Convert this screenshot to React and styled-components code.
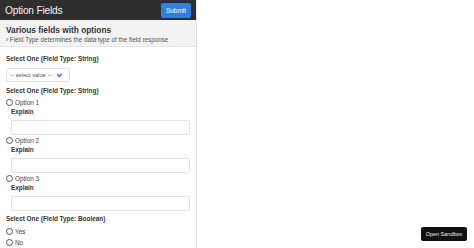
import React from "react"
import styled, { createGlobalStyle } from "styled-components"

const Global = createGlobalStyle`
  html, body {
    margin: 0;
    padding: 0;
    background: #fff;
    font-family: "Liberation Sans", Arial, sans-serif;
  }
`

const Page = styled.div`
  display: flex;
  align-items: flex-start;
  height: 248px;
  overflow: hidden;
  position: relative;
`

const Panel = styled.div`
  width: 196px;
  height: 248px;
  border-right: 1px solid #e0e0e0;
  flex-shrink: 0;
  overflow: hidden;
`

const TopBar = styled.div`
  height: 20px;
  background: #2e2e2e;
  display: flex;
  align-items: center;
  justify-content: space-between;
  padding: 0 5px 0 5px;
`

const Title = styled.div`
  color: #f2f2f2;
  font-size: 10.2px;
  letter-spacing: -0.2px;
`

const SubmitButton = styled.button`
  background: #2f7fe0;
  color: #fff;
  border: none;
  border-radius: 2px;
  font-family: inherit;
  font-size: 6.5px;
  height: 15px;
  width: 30px;
  padding: 0;
  margin-top: 1px;
`

const Intro = styled.div`
  background: #f3f3f3;
  height: 27px;
  box-sizing: border-box;
  padding: 5px 6px 0;
  border-bottom: 1px solid #e6e6e6;
`

const IntroTitle = styled.div`
  font-size: 8.3px;
  font-weight: bold;
  color: #333;
`

const IntroNote = styled.div`
  font-size: 6.3px;
  color: #555;
  margin-top: 1px;
`

const Form = styled.div`
  padding: 8px 6px 0;
`

const Label = styled.div`
  font-size: 6.4px;
  font-weight: bold;
  color: #333;
  line-height: 8px;
  margin-top: ${p => p.$top || 0}px;
  margin-bottom: ${p => p.$gap || 0}px;
`

const SelectBox = styled.div`
  width: 64px;
  height: 14px;
  box-sizing: border-box;
  border: 1px solid #e2e2e2;
  border-radius: 2px;
  display: flex;
  align-items: center;
  gap: 4px;
  padding-left: 3px;
  font-size: 5.8px;
  color: #555;
  margin-bottom: 5px;
`

const Option = styled.label`
  display: flex;
  align-items: center;
  gap: 2px;
  font-size: 6.4px;
  color: #444;
  height: 11px;
`

const Radio = styled.span`
  width: 5px;
  height: 5px;
  border: 1px solid #555;
  border-radius: 50%;
  display: inline-block;
`

const Explain = styled.div`
  padding-left: 5px;
`

const ExplainLabel = styled.div`
  font-size: 6.4px;
  font-weight: bold;
  color: #333;
  line-height: 8px;
  margin: 0 0 4px;
`

const TextInput = styled.div`
  height: 15px;
  box-sizing: border-box;
  border: 1px solid #e2e2e2;
  border-radius: 2px;
`

const SandboxButton = styled.button`
  position: absolute;
  right: 7px;
  bottom: 7px;
  background: #111;
  color: #f0f0f0;
  border: none;
  border-radius: 2px;
  font-family: inherit;
  font-size: 5.5px;
  height: 14px;
  width: 46px;
  padding: 0;
`

const options = ["Option 1", "Option 2", "Option 3"]

export default function App() {
  return (
    <Page>
      <Global />
      <Panel>
        <TopBar>
          <Title>Option Fields</Title>
          <SubmitButton>Submit</SubmitButton>
        </TopBar>
        <Intro>
          <IntroTitle>Various fields with options</IntroTitle>
          <IntroNote>› Field Type determines the data type of the field response</IntroNote>
        </Intro>
        <Form>
          <Label $gap={5}>Select One (Field Type: String)</Label>
          <SelectBox>
            -- select value --
            <svg width="7" height="5" viewBox="0 0 7 5">
              <path d="M1 1l2.5 2.5L6 1" stroke="#2f6fd6" strokeWidth="1.3" fill="none" />
            </svg>
          </SelectBox>
          <Label $gap={2}>Select One (Field Type: String)</Label>
          {options.map(o => (
            <React.Fragment key={o}>
              <Option>
                <Radio />
                {o}
              </Option>
              <Explain>
                <ExplainLabel>Explain</ExplainLabel>
                <TextInput />
              </Explain>
            </React.Fragment>
          ))}
          <Label $top={4} $gap={3}>Select One (Field Type: Boolean)</Label>
          <Option>
            <Radio />
            Yes
          </Option>
          <Option>
            <Radio />
            No
          </Option>
        </Form>
      </Panel>
      <SandboxButton>Open Sandbox</SandboxButton>
    </Page>
  )
}
